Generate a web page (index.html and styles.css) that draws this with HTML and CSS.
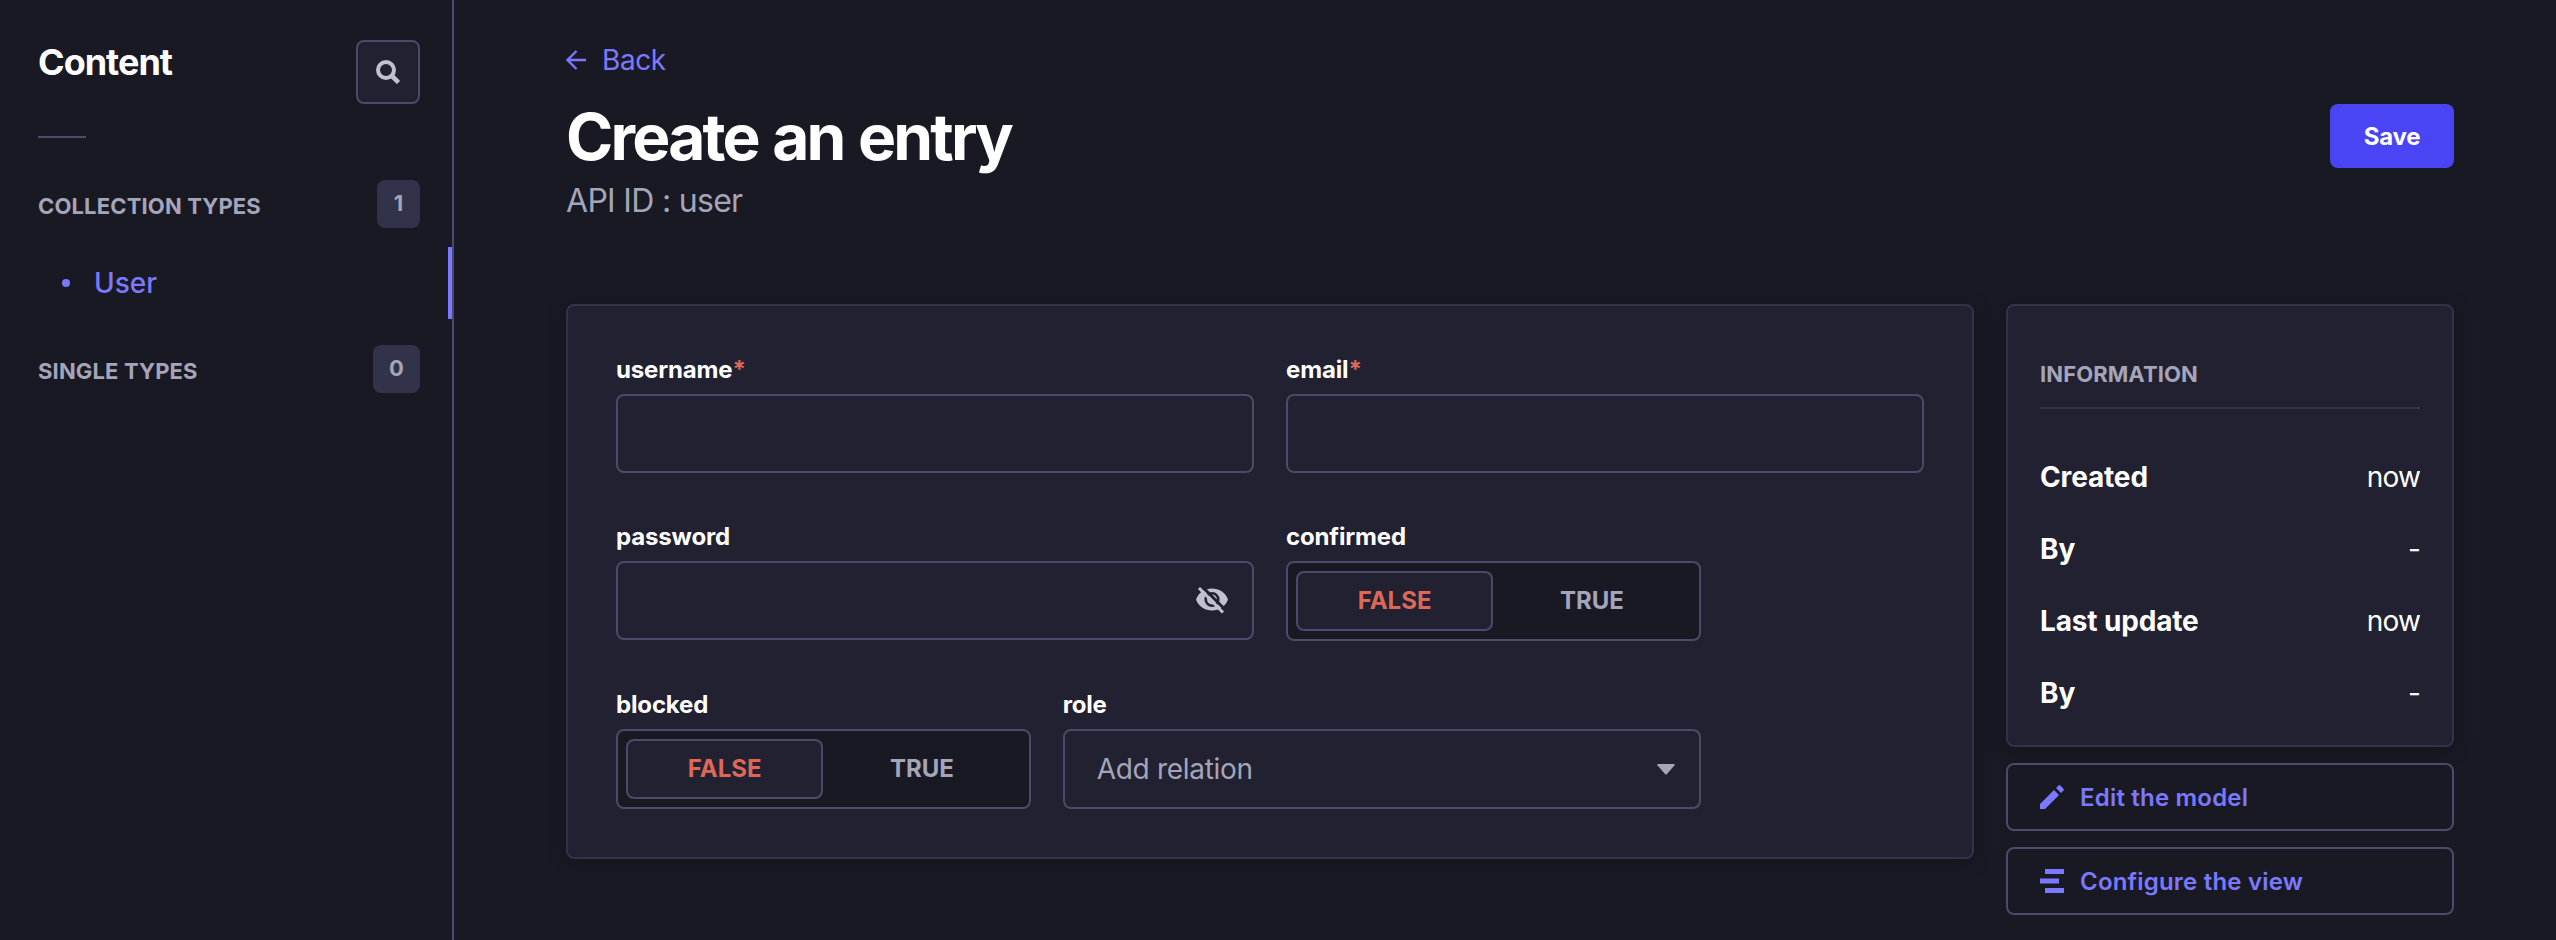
FILE: index.html
```
<!DOCTYPE html>
<html lang="en">
<head>
  <meta charset="UTF-8">
  <meta name="viewport" content="width=device-width, initial-scale=1.0">
  <title>Create an entry</title>
  <link rel="stylesheet" href="styles.css">
</head>
<body>
  <nav class="sidebar">
    <div class="sidebar-header">
      <h2>Content</h2>
      <button class="search-btn" aria-label="Search">
        <svg width="24" height="24" viewBox="0 0 24 24"><circle cx="10" cy="10" r="8" fill="none" stroke="#c0c0cf" stroke-width="4"/><path d="M15.500 15.500l7 7" stroke="#c0c0cf" stroke-width="4.600"/></svg>
      </button>
    </div>
    <hr class="sidebar-divider">

    <div class="section-title">
      <span>Collection Types</span>
      <span class="badge">1</span>
    </div>
    <a class="nav-link active"><span class="dot"></span>User</a>
    <div class="section-title">
      <span>Single Types</span>
      <span class="badge">0</span>
    </div>
  </nav>

  <main>
    <a class="back">
      <svg width="20" height="20" viewBox="0 0 20 20"><path d="M20 10H1.500M10.500 1L1.500 10l9 9" fill="none" stroke="#7b79ff" stroke-width="2.300"/></svg>
      <span>Back</span>
    </a>
    <header class="page-header">
      <h1>Create an entry</h1>
      <button class="save-btn">Save</button>
    </header>
    <p class="subtitle">API ID : user</p>

    <div class="layout">
      <form class="card form">
        <div class="field col-6">
          <label>username<span class="required">*</span></label>
          <div class="input"></div>
        </div>
        <div class="field col-6">
          <label>email<span class="required">*</span></label>
          <div class="input"></div>
        </div>
        <div class="field col-6">
          <label>password</label>
          <div class="input">
            <svg width="32" height="28" viewBox="0 0 32 28"><path d="M0 12.500C3 5 9 1.500 16 1.500S29 5 32 12.500C29 20 23 23.500 16 23.500S3 20 0 12.500z" fill="#c0c0cf"/><circle cx="16" cy="12.500" r="6.300" fill="none" stroke="#222132" stroke-width="2.600"/><path d="M5-1.500l25 25" stroke="#222132" stroke-width="3"/><path d="M3 1l24 24.500" stroke="#c0c0cf" stroke-width="3"/></svg>
          </div>
        </div>
        <div class="field col-4">
          <label>confirmed</label>
          <div class="toggle">
            <span class="option selected">FALSE</span>
            <span class="option">TRUE</span>
          </div>
        </div>
        <div class="field col-4 new-row">
          <label>blocked</label>
          <div class="toggle">
            <span class="option selected">FALSE</span>
            <span class="option">TRUE</span>
          </div>
        </div>
        <div class="field col-6">
          <label>role</label>
          <div class="select">
            <span>Add relation</span>
            <svg width="18" height="11" viewBox="0 0 18 11"><path d="M1 0h16q1.500 0 .6 1.200L9.800 10.300q-.8.900-1.600 0L.4 1.200Q-.500 0 1 0z" fill="#a5a5ba"/></svg>
          </div>
        </div>
      </form>

      <aside>
        <div class="card info">
          <h3>Information</h3>
          <dl>
            <div><dt>Created</dt><dd>now</dd></div>
            <div><dt>By</dt><dd>-</dd></div>
            <div><dt>Last update</dt><dd>now</dd></div>
            <div><dt>By</dt><dd>-</dd></div>
          </dl>
        </div>
        <a class="link-btn">
          <svg width="24" height="24" viewBox="0 0 24 24"><path d="M0 19L14 5l5 5L5 24H0zM16 3l2.500-2.500q.9-.8 1.800 0l3.200 3.200q.8.900 0 1.800L21 8z" fill="#7b79ff"/></svg>
          <span>Edit the model</span>
        </a>
        <a class="link-btn">
          <svg width="24" height="24" viewBox="0 0 24 24"><path d="M5 0h19v5H5zM0 9.500h19v5H0zM5 19h19v5H5z" fill="#7b79ff"/></svg>
          <span>Configure the view</span>
        </a>
      </aside>
    </div>
  </main>
</body>
</html>
```
FILE: styles.css
```
* {
  box-sizing: border-box;
}
body {
  margin: 0;
  display: flex;
  height: 940px;
  overflow: hidden;
  background: #191924;
  color: #fff;
  font-family: Inter, "Liberation Sans", sans-serif;
  font-size: 28px;
}
h1, h2, h3, p, dl, dd {
  margin: 0;
}
svg {
  display: block;
  flex: none;
}
button {
  font-family: inherit;
}

/* sidebar */
.sidebar {
  width: 454px;
  flex: none;
  border-right: 2px solid #4a4a6a;
  padding-top: 40px;
}
.sidebar-header {
  display: flex;
  justify-content: space-between;
  align-items: flex-start;
  padding: 0 32px 0 38px;
}
h2 {
  font-size: 36px;
  font-weight: 700;
  line-height: 44px;
  letter-spacing: -1px;
}
.search-btn {
  width: 64px;
  height: 64px;
  display: flex;
  align-items: center;
  justify-content: center;
  padding: 0;
  background: #222132;
  border: 2px solid #4a4a6a;
  border-radius: 8px;
}
.sidebar-divider {
  width: 48px;
  height: 2px;
  border: none;
  background: #4a4a6a;
  margin: 32px 0 42px 38px;
}
.section-title {
  display: flex;
  align-items: center;
  justify-content: space-between;
  height: 48px;
  padding: 4px 32px 0 38px;
  font-size: 22px;
  font-weight: 700;
  letter-spacing: 0.15px;
  text-transform: uppercase;
  color: #a5a5ba;
}
.badge {
  min-width: 43px;
  height: 48px;
  margin-top: -4px;
  padding: 0 16px;
  line-height: 46px;
  text-align: center;
  background: #32324a;
  border-radius: 8px;
}
.nav-link {
  display: flex;
  align-items: center;
  height: 72px;
  margin: 19px 0 26px;
  padding-left: 62px;
  font-weight: 500;
  color: #7b79ff;
}
.nav-link.active {
  border-right: 4px solid #7b79ff;
}
.dot {
  width: 8px;
  height: 8px;
  margin-right: 24px;
  border-radius: 50%;
  background: #7b79ff;
}

/* page */
main {
  flex: 1;
  padding: 40px 102px 0 112px;
}
.back {
  display: flex;
  align-items: center;
  gap: 16px;
  height: 40px;
  letter-spacing: -0.4px;
  color: #7b79ff;
}
.page-header {
  display: flex;
  align-items: center;
  justify-content: space-between;
  height: 80px;
  margin-top: 16px;
}
h1 {
  padding-top: 2px;
  font-size: 64px;
  font-weight: 700;
  line-height: 80px;
  letter-spacing: -2.8px;
  word-spacing: 2px;
}
.save-btn {
  width: 124px;
  height: 64px;
  padding: 0;
  border: none;
  border-radius: 8px;
  background: #4945f5;
  color: #fff;
  font-size: 24px;
  font-weight: 700;
  letter-spacing: -0.3px;
}
.subtitle {
  padding-top: 1px;
  font-size: 32px;
  line-height: 48px;
  letter-spacing: -0.7px;
  color: #a5a5ba;
}
.layout {
  display: flex;
  align-items: flex-start;
  gap: 32px;
  margin-top: 79px;
}
.card {
  background: #222132;
  border: 2px solid #32324a;
  border-radius: 8px;
  box-shadow: 0 2px 20px rgba(3, 3, 5, 0.2);
}

/* form */
.form {
  flex: 1;
  display: grid;
  grid-template-columns: repeat(12, 1fr);
  align-items: start;
  gap: 48px 32px;
  padding: 48px;
}
.col-6 {
  grid-column: span 6;
}
.col-4 {
  grid-column: span 4;
}
.new-row {
  grid-column: 1 / span 4;
}
label {
  display: block;
  margin-bottom: 8px;
  font-size: 24px;
  font-weight: 700;
  line-height: 32px;
  letter-spacing: -0.15px;
}
.required {
  color: #de6858;
}
.input, .select, .toggle {
  display: flex;
  align-items: center;
  height: 80px;
  border: 2px solid #4a4a6a;
  border-radius: 8px;
}
.input {
  height: 79px;
  justify-content: flex-end;
  padding-right: 24px;
}
.select {
  justify-content: space-between;
  padding: 0 24px 0 32px;
  letter-spacing: -0.3px;
  color: #a5a5ba;
}
.toggle {
  padding: 8px;
  background: #191924;
}
.option {
  width: 50%;
  height: 60px;
  line-height: 60px;
  text-align: center;
  font-size: 24px;
  font-weight: 700;
  color: #a5a5ba;
}
.option.selected {
  line-height: 56px;
  background: #222132;
  border: 2px solid #4a4a6a;
  border-radius: 8px;
  color: #de6858;
}

/* right column */
aside {
  width: 448px;
  flex: none;
}
.info {
  height: 443px;
  padding: 50px 32px 0;
}
h3 {
  height: 53px;
  border-bottom: 2px solid #32324a;
  font-size: 22px;
  font-weight: 700;
  letter-spacing: 0.1px;
  line-height: 36px;
  text-transform: uppercase;
  color: #a5a5ba;
}
dl {
  padding-top: 48px;
}
dl div {
  display: flex;
  justify-content: space-between;
  height: 72px;
  line-height: 40px;
}
dt {
  font-weight: 700;
  letter-spacing: -0.15px;
}
dd {
  letter-spacing: -0.8px;
}
.link-btn {
  display: flex;
  align-items: center;
  gap: 16px;
  height: 68px;
  margin-top: 16px;
  padding-left: 32px;
  border: 2px solid #4a4a6a;
  border-radius: 8px;
  font-size: 24px;
  font-weight: 600;
  letter-spacing: 0.2px;
  color: #7b79ff;
}
```
